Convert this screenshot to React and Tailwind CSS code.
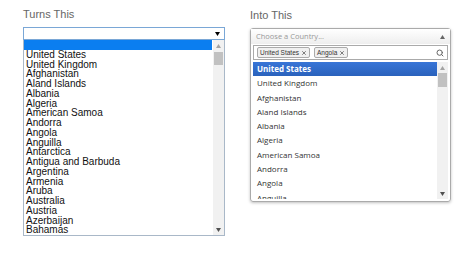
import { Search, X } from "lucide-react";

const countries = [
  "United States",
  "United Kingdom",
  "Afghanistan",
  "Aland Islands",
  "Albania",
  "Algeria",
  "American Samoa",
  "Andorra",
  "Angola",
  "Anguilla",
  "Antarctica",
  "Antigua and Barbuda",
  "Argentina",
  "Armenia",
  "Aruba",
  "Australia",
  "Austria",
  "Azerbaijan",
  "Bahamas",
];

const Arrow = ({ up, className = "" }) => (
  <svg width="5" height="4" viewBox="0 0 5 4" className={className}>
    {up ? <path d="M0 4 L2.5 0 L5 4 Z" fill="currentColor" /> : <path d="M0 0 L5 0 L2.5 4 Z" fill="currentColor" />}
  </svg>
);

const Scrollbar = ({ thumbTop, thumbH }) => (
  <div className="w-[11px] bg-[#f1f1f1] flex flex-col items-center shrink-0">
    <div className="h-[11px] flex items-center justify-center text-[#a3a3a3]">
      <Arrow up />
    </div>
    <div className={`w-[9px] bg-[#c1c1c1] ${thumbTop} ${thumbH}`} />
    <div className="flex-1" />
    <div className="h-[11px] flex items-center justify-center text-[#505050]">
      <Arrow />
    </div>
  </div>
);

const Tag = ({ label }) => (
  <span className="flex items-center gap-[2px] h-[11px] px-[2px] border border-[#aaa] rounded-[2px] bg-[#f0f0f0] text-[6.5px] text-[#333]">
    {label}
    <X size={6} strokeWidth={3} className="text-[#555]" />
  </span>
);

export default function App() {
  return (
    <div className="w-[474px] h-[255px] bg-white flex pl-[23px] gap-[25px] font-['Liberation_Sans',Arial,sans-serif]">
      {/* Native select */}
      <div className="w-[202px] pt-[8px] flex flex-col">
        <div className="text-[11px] text-[#666] h-[19px] leading-[12px]">Turns This</div>
        <div className="border border-[#7aa7d6] h-[13px] flex items-center justify-end pr-[4px]">
          <Arrow className="text-black" />
        </div>
        <div className="border border-t-0 border-[#a9b8c8] flex h-[196px]">
          <div className="flex-1 flex flex-col">
            <div className="h-[10px] bg-[#0b7ef0] mr-[1px]" />
            {countries.map((c) => (
              <div key={c} className="h-[9.75px] leading-[9.75px] text-[10px] text-[#111] pl-[2px] whitespace-nowrap">
                {c}
              </div>
            ))}
          </div>
          <Scrollbar thumbTop="mt-[1px]" thumbH="h-[13px]" />
        </div>
      </div>

      {/* Chosen select */}
      <div className="w-[201px] pt-[9px] flex flex-col">
        <div className="text-[11px] text-[#666] h-[19px] leading-[12px]">Into This</div>
        <div className="border border-[#aaa] rounded-[3px] shadow-[0_1px_3px_rgba(0,0,0,0.25)] flex flex-col">
          <div className="h-[15px] flex items-center justify-between px-[5px] bg-[linear-gradient(#fff,#eee)] text-[7.5px] text-[#999] font-['Open_Sans',sans-serif]">
            <span>Choose a Country...</span>
            <Arrow up className="text-[#666]" />
          </div>
          <div className="px-[2px] pt-[1px]">
            <div className="h-[15px] border border-[#aaa] flex items-center gap-[4px] px-[3px] bg-white">
              <Tag label="United States" />
              <Tag label="Angola" />
              <div className="flex-1" />
              <Search size={8} strokeWidth={3} className="text-[#666]" />
            </div>
          </div>
          <div className="flex pl-[2px] pr-[2px] pt-[2px] pb-[2px] h-[141px] overflow-hidden">
            <div className="flex-1 flex flex-col overflow-hidden font-['Open_Sans',sans-serif]">
              {countries.slice(0, 10).map((c, i) => (
                <div
                  key={c}
                  className={`h-[14.3px] shrink-0 leading-[14.3px] text-[8px] pl-[4px] whitespace-nowrap ${
                    i === 0 ? "bg-[linear-gradient(#3875d7,#2a62bc)] text-white font-bold" : "text-[#333]"
                  }`}
                >
                  {c}
                </div>
              ))}
            </div>
            <Scrollbar thumbTop="mt-[0px]" thumbH="h-[14px]" />
          </div>
        </div>
      </div>
    </div>
  );
}
